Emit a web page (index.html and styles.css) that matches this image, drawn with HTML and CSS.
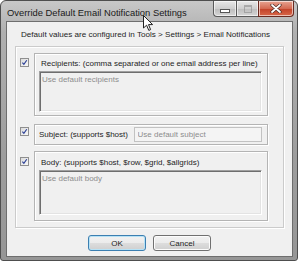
FILE: index.html
```html
<!DOCTYPE html>
<html lang="en">
<head>
    <meta charset="UTF-8">
    <title>Override Default Email Notification Settings</title>
    <link rel="stylesheet" href="styles.css">
</head>
<body>

<div class="window">
    <div class="titlebar">
        <span class="title">Override Default Email Notification Settings</span>
        <div class="caption-btns">
            <span class="cap cap-min"><i></i></span>
            <span class="cap cap-max"><i></i></span>
            <span class="cap cap-close">
                <svg width="12" height="9" viewBox="0 0 12 9">
                    <path d="M2 1 L10 8 M10 1 L2 8" stroke="#4a2a24" stroke-width="3.2" stroke-linecap="round"/>
                    <path d="M2 1 L10 8 M10 1 L2 8" stroke="#fff" stroke-width="1.8" stroke-linecap="round"/>
                </svg>
            </span>
        </div>
    </div>

    <div class="client">
        <p class="hint">Default values are configured in Tools &gt; Settings &gt; Email Notifications</p>

        <div class="panel">
            <!-- recipients -->
            <div class="row row-recipients">
                <span class="check"><svg viewBox="0 0 9 9"><path d="M1.8 4.6 L3.7 6.8 L7.4 1.6" fill="none" stroke="#2b3f96" stroke-width="1.5"/></svg></span>
                <div class="group">
                    <div class="group-label">Recipients: (comma separated or one email address per line)</div>
                    <textarea class="field area-recipients" placeholder="Use default recipients"></textarea>
                </div>
            </div>

            <!-- subject -->
            <div class="row row-subject">
                <span class="check"><svg viewBox="0 0 9 9"><path d="M1.8 4.6 L3.7 6.8 L7.4 1.6" fill="none" stroke="#2b3f96" stroke-width="1.5"/></svg></span>
                <div class="group group-subject">
                    <span class="subject-label">Subject: (supports $host)</span>
                    <input type="text" class="subject-input" placeholder="Use default subject">
                </div>
            </div>

            <!-- body -->
            <div class="row row-body">
                <span class="check"><svg viewBox="0 0 9 9"><path d="M1.8 4.6 L3.7 6.8 L7.4 1.6" fill="none" stroke="#2b3f96" stroke-width="1.5"/></svg></span>
                <div class="group">
                    <div class="group-label body-label">Body: (supports $host, $row, $grid, $allgrids)</div>
                    <textarea class="field area-body" placeholder="Use default body"></textarea>
                </div>
            </div>
        </div>

        <div class="buttons">
            <button class="btn btn-default">OK</button>
            <button class="btn">Cancel</button>
        </div>
    </div>

    <svg class="cursor" width="11" height="17" viewBox="0 0 11 17">
        <path d="M0.5 0.5 L0.5 13 L3.6 10.2 L5.8 15.4 L7.6 14.6 L5.5 9.6 L9.6 9.6 Z" fill="#fff" stroke="#222" stroke-width="1"/>
    </svg>
</div>

</body>
</html>
```

FILE: styles.css
```css
body {
    margin: 0;
    padding: 0;
    background: #ffffff;
    font-family: "Liberation Sans", Arial, sans-serif;
    color: #1e1e1e;
}
.window {
    position: relative;
    width: 298px;
    height: 261px;
    box-sizing: border-box;
    border: 1px solid #4e4e4e;
    border-radius: 6px 6px 3px 3px;
    padding: 0 4px 3px 5px;
    background: linear-gradient(to bottom, #c8c8c8 0%, #b0b0b0 12%, #9d9d9d 60%, #969696 100%);
    display: flex;
    flex-direction: column;
}
.titlebar {
    height: 20px;
    display: flex;
    align-items: flex-start;
    justify-content: space-between;
}
.title {
    font-size: 9.4px;
    color: #1a1a1a;
    margin: 6px 0 0 1px;
    white-space: nowrap;
}
.caption-btns {
    display: flex;
    margin-right: -1px;
}
.cap {
    height: 16px;
    box-sizing: border-box;
    border: 1px solid #5a5a5a;
    border-top: none;
    display: flex;
    align-items: center;
    justify-content: center;
    background: linear-gradient(to bottom, #e8e8e8, #cfcfcf 50%, #bcbcbc 51%, #d6d6d6);
    box-shadow: inset 0 0 0 1px rgba(255, 255, 255, 0.6);
}
.cap-min {
    width: 23px;
    border-radius: 0 0 0 4px;
    border-right: none;
}
.cap-min i {
    display: block;
    width: 8px;
    height: 2px;
    margin-top: 4px;
    background: #fff;
    border: 1px solid #555;
}
.cap-max {
    width: 22px;
    border-right: none;
}
.cap-max i {
    display: block;
    width: 6px;
    height: 5px;
    border: 1px solid #8a8a8a;
    border-top-width: 2px;
    opacity: 0.6;
}
.cap-close {
    width: 36px;
    border-radius: 0 0 4px 0;
    border-color: #6a2a20;
    background: linear-gradient(to bottom, #e8a593, #d46a52 50%, #c24128 51%, #d8684a);
}
.client {
    flex: 1;
    background: #f0f0f0;
    border: 1px solid #6e6e6e;
    padding: 0 8px;
    display: flex;
    flex-direction: column;
}
.hint {
    margin: 0;
    height: 24px;
    line-height: 25px;
    padding-left: 6px;
    font-size: 8.1px;
    white-space: nowrap;
}
.panel {
    height: 182px;
    box-sizing: border-box;
    border: 1px solid #cbcbcb;
    box-shadow: inset 1px 1px 0 #fff, 1px 1px 0 #fff;
    padding: 6px 15px 0 0;
}
.row {
    display: grid;
    grid-template-columns: 18px 234px;
    align-items: start;
}
.row-subject {
    margin-top: 8px;
}
.row-body {
    margin-top: 6px;
}
.check {
    display: block;
    width: 9px;
    height: 9px;
    box-sizing: border-box;
    margin-left: 4px;
    border: 1px solid #8f8f8f;
    background: linear-gradient(to bottom right, #dcdcdc, #f8f8f8);
}
.check svg {
    display: block;
    width: 7px;
    height: 7px;
}
.row-recipients .check {
    margin-top: 5px;
}
.row-subject .check {
    margin-top: 3px;
}
.row-body .check {
    margin-top: 6px;
}
.group {
    box-sizing: border-box;
    border: 1px solid #b4b4b4;
    box-shadow: inset 1px 1px 0 #fff, 1px 1px 0 #fff;
    padding: 0 5px 0 4px;
    display: flex;
    flex-direction: column;
}
.row-recipients .group {
    height: 63px;
}
.row-body .group {
    height: 70px;
}
.group-label {
    font-size: 8px;
    height: 17px;
    line-height: 20px;
    padding-left: 2px;
    white-space: nowrap;
}
.body-label {
    height: 18px;
    line-height: 22px;
}
.field {
    display: block;
    width: 223px;
    box-sizing: border-box;
    resize: none;
    margin: 0;
    padding: 3px 2px;
    font-family: "Liberation Sans", Arial, sans-serif;
    font-size: 8px;
    background: #f0f0f0;
    border: 1px solid;
    border-color: #a0a0a0 #fff #fff #a0a0a0;
    box-shadow: inset 1px 1px 0 #6e6e6e, inset -1px -1px 0 #e3e3e3;
    outline: none;
}
.field::placeholder,
.subject-input::placeholder {
    color: #8d8d8d;
}
.area-recipients {
    height: 41px;
}
.area-body {
    height: 45px;
}
.group-subject {
    height: 21px;
    flex-direction: row;
    align-items: center;
}
.subject-label {
    font-size: 8px;
    width: 95px;
    white-space: nowrap;
}
.subject-input {
    width: 129px;
    height: 15px;
    box-sizing: border-box;
    margin: 0;
    padding: 0 3px;
    font-family: "Liberation Sans", Arial, sans-serif;
    font-size: 8px;
    background: #f4f4f4;
    border: 1px solid #c2c2c2;
    outline: none;
}
.buttons {
    display: flex;
    justify-content: center;
    gap: 7px;
    margin-top: 7px;
}
.btn {
    width: 58px;
    height: 16px;
    box-sizing: border-box;
    padding: 0;
    font-family: "Liberation Sans", Arial, sans-serif;
    font-size: 8px;
    color: #1e1e1e;
    border: 1px solid #707070;
    border-radius: 3px;
    background: linear-gradient(to bottom, #f2f2f2, #ebebeb 50%, #dddddd 51%, #cfcfcf);
    box-shadow: inset 0 0 0 1px #fcfcfc;
}
.btn-default {
    border-color: #3c7fb1;
    box-shadow: inset 0 0 0 1px #b6e2f6;
}
.cursor {
    position: absolute;
    left: 142px;
    top: 14px;
}
```
